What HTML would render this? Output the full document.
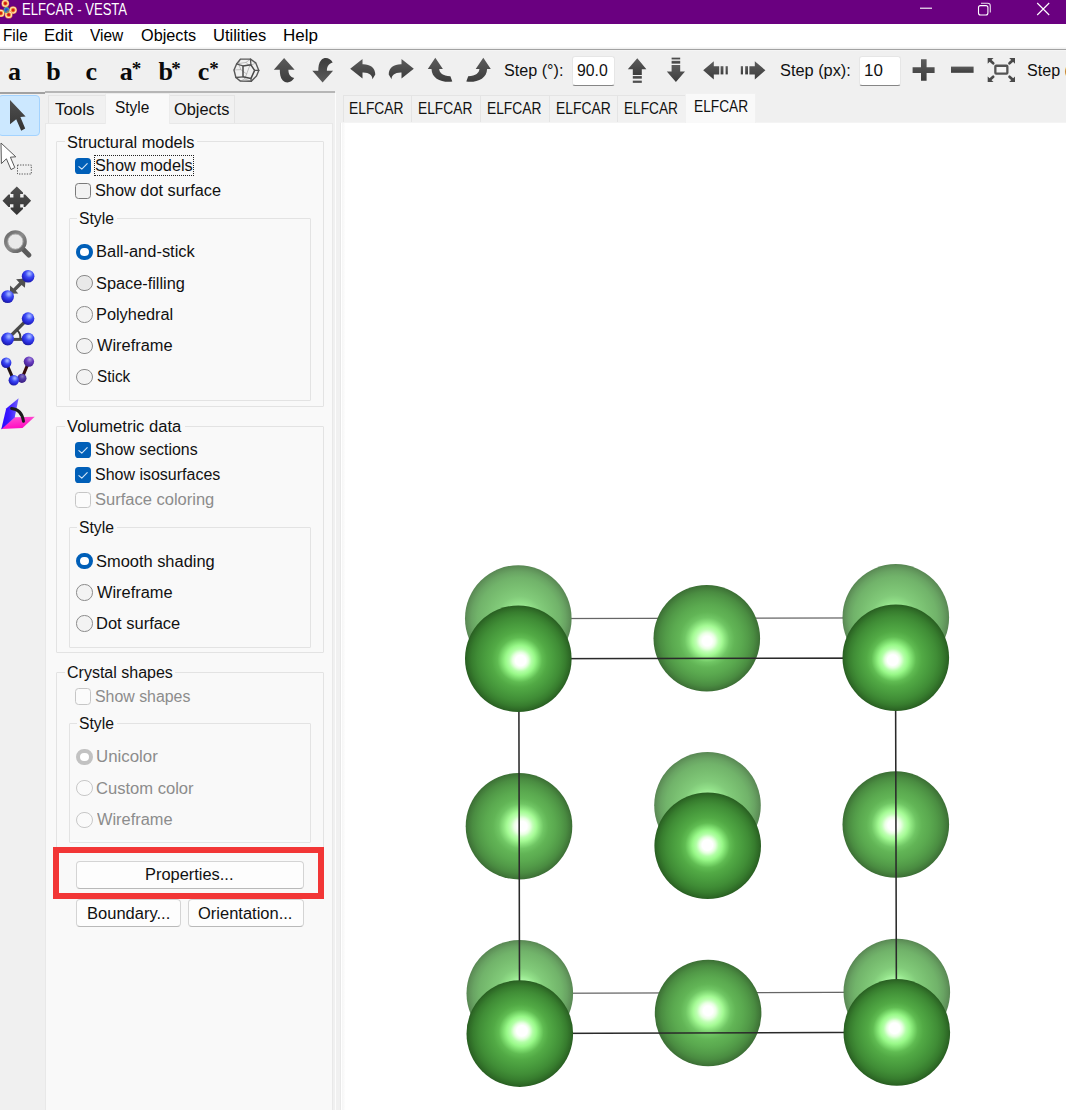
<!DOCTYPE html>
<html><head><meta charset="utf-8"><title>ELFCAR - VESTA</title>
<style>
html,body{margin:0;padding:0;}
body{width:1066px;height:1110px;overflow:hidden;position:relative;background:#f0f0f0;font-family:"Liberation Sans",sans-serif;}
.a{position:absolute;box-sizing:border-box;}
.t{position:absolute;white-space:nowrap;line-height:20px;transform-origin:0 50%;font-family:"Liberation Sans",sans-serif;}
.sb{position:absolute;white-space:nowrap;line-height:30px;font-family:"Liberation Serif",serif;font-weight:bold;color:#0a0a0a;transform-origin:0 50%;}
.gb{position:absolute;box-sizing:border-box;border:1.2px solid #e3e3e3;border-radius:1px;}
.lg{position:absolute;background:#f9f9f9;height:12px;}
.cb{position:absolute;box-sizing:border-box;width:16.3px;height:16.3px;border-radius:3.6px;}
.cb.on{background:#005fb8;}
.cb.off{background:#f2f2f2;border:1.4px solid #7a7a7a;}
.cb.dis{background:#fbfbfb;border:1.3px solid #c6c6c6;}
.rb{position:absolute;box-sizing:border-box;width:16.4px;height:16.4px;border-radius:50%;}
.rb.hov{background:#e9e9e9;border:1.4px solid #8a8a8a;}
.rb.off{background:#f3f3f3;border:1.4px solid #8c8c8c;}
.rb.on{background:#fff;border:4.7px solid #005fb8;}
.rb.dis{background:#fafafa;border:1.3px solid #c8c8c8;}
.rb.dison{background:#fff;border:4.8px solid #c2c2c2;}
.btn{position:absolute;box-sizing:border-box;background:#fdfdfd;border:1px solid #d4d4d4;border-bottom-color:#b9b9b9;border-radius:4px;}
.tab{position:absolute;box-sizing:border-box;background:#f1f1f1;border:1px solid #e4e4e4;border-bottom:none;}
.inp{position:absolute;box-sizing:border-box;background:#fff;border:1px solid #e6e6e6;border-bottom:1.6px solid #868686;border-radius:3px;}
svg{position:absolute;overflow:visible;}
</style></head><body>

<div class="a" style="left:0;top:0;width:1066px;height:23.6px;background:#6a0080;"></div>
<svg style="left:0;top:0" width="22" height="24" viewBox="0 0 22 24">
<defs><radialGradient id="ic"><stop offset="0" stop-color="#cc1010"/><stop offset=".3" stop-color="#d62618"/><stop offset=".45" stop-color="#f08a34"/><stop offset=".72" stop-color="#fde3b8"/><stop offset=".9" stop-color="#f9b066"/><stop offset="1" stop-color="#f08c4a" stop-opacity=".85"/></radialGradient>
<radialGradient id="icb"><stop offset="0" stop-color="#1846c8"/><stop offset=".6" stop-color="#2a68d8"/><stop offset="1" stop-color="#5ac27a"/></radialGradient></defs>
<g stroke="#d8c060" stroke-width="1.6"><path d="M6.5 10 L5.3 3.4M6.5 10 L13 10.1M6.5 10 L8.7 14.7M6.5 10 L0.8 13.2"/></g>
<circle cx="5.3" cy="3.4" r="3.9" fill="url(#ic)"/><circle cx="13.1" cy="10.1" r="3.9" fill="url(#ic)"/>
<circle cx="8.7" cy="14.7" r="3.9" fill="url(#ic)"/><circle cx="0.8" cy="13.2" r="3.9" fill="url(#ic)"/>
<circle cx="6.5" cy="10" r="2.9" fill="url(#icb)"/><circle cx="7.6" cy="11.4" r="1.2" fill="#b07848" opacity=".8"/>
</svg>
<span class="t" style="left:21.53px;top:-0.14px;font-size:16px;color:#fff;transform:scaleX(0.8171);">ELFCAR - VESTA</span>
<svg style="left:0;top:0" width="1066" height="24" viewBox="0 0 1066 24" fill="none" stroke="#fff" stroke-width="1.1">
<path d="M920 8.2H932"/>
<rect x="978.5" y="5.6" width="9.4" height="9.4" rx="2"/><path d="M981 3.2H987.6Q990.3 3.2 990.3 5.9V12.6" stroke-opacity=".85"/>
<path d="M1037.2 3 L1049.2 15 M1049.2 3 L1037.2 15"/>
</svg>
<div class="a" style="left:0;top:23.6px;width:1066px;height:23px;background:#fff;"></div>
<span class="t" style="left:3.45px;top:26.36px;font-size:16px;color:#000;transform:scaleX(0.9554);">File</span>
<span class="t" style="left:44.24px;top:26.36px;font-size:16px;color:#000;transform:scaleX(1.0366);">Edit</span>
<span class="t" style="left:90.34px;top:26.36px;font-size:16px;color:#000;transform:scaleX(0.9660);">View</span>
<span class="t" style="left:141.04px;top:26.36px;font-size:16px;color:#000;transform:scaleX(1.0149);">Objects</span>
<span class="t" style="left:212.73px;top:26.36px;font-size:16px;color:#000;transform:scaleX(1.0330);">Utilities</span>
<span class="t" style="left:283.31px;top:26.36px;font-size:16px;color:#000;transform:scaleX(1.0632);">Help</span>
<div class="a" style="left:0;top:46.6px;width:1066px;height:1.4px;background:#f7f7f7;"></div><div class="a" style="left:0;top:48.9px;width:1066px;height:1.2px;background:#a2a2a2;"></div><div class="a" style="left:0;top:50.1px;width:1066px;height:1px;background:#f5f5f5;"></div>
<div class="a" style="left:45px;top:91px;width:289.9px;height:1.7px;background:#b6b6b6;"></div><div class="a" style="left:0;top:92.1px;width:45px;height:1.7px;background:#a2a2a2;"></div>
<span class="sb" style="left:8.0px;top:56.5px;font-size:26px">a</span>
<span class="sb" style="left:46.2px;top:56.5px;font-size:26px">b</span>
<span class="sb" style="left:85.4px;top:56.5px;font-size:26px">c</span>
<span class="sb" style="left:119.8px;top:56.5px;font-size:26px">a</span>
<span class="sb" style="left:158.4px;top:56.5px;font-size:26px">b</span>
<span class="sb" style="left:197.8px;top:56.5px;font-size:26px">c</span>
<span class="sb" style="left:131.8px;top:54.1px;font-size:19px">*</span>
<span class="sb" style="left:171.3px;top:54.1px;font-size:19px">*</span>
<span class="sb" style="left:209.3px;top:54.1px;font-size:19px">*</span>
<span class="t" style="left:504.47px;top:61.06px;font-size:16px;color:#111;transform:scaleX(1.0090);">Step (°):</span>
<div class="inp" style="left:572.4px;top:55.8px;width:42.2px;height:30px;"></div>
<span class="t" style="left:577.17px;top:60.96px;font-size:16px;color:#111;transform:scaleX(0.9868);">90.0</span>
<span class="t" style="left:779.86px;top:61.06px;font-size:16px;color:#111;transform:scaleX(1.0211);">Step (px):</span>
<div class="inp" style="left:858.8px;top:55.8px;width:42.4px;height:30px;"></div>
<span class="t" style="left:863.51px;top:60.96px;font-size:16px;color:#111;transform:scaleX(1.0584);">10</span>
<span class="t" style="left:1027.28px;top:61.06px;font-size:16px;color:#111;transform:scaleX(1.0052);">Step (</span>
<svg style="left:0;top:0" width="1066" height="96" viewBox="0 0 1066 96">
<defs><linearGradient id="ag" x1="0" y1="0" x2="0" y2="1"><stop offset="0" stop-color="#5c5c5c"/><stop offset="1" stop-color="#3c3c3c"/></linearGradient>
<path id="aup" d="M284.1 57.9 L294.6 69.8 L288.4 69.8 C288.4 74.2 290.2 77 294.2 78.1 C291.8 82.6 286.2 84 282.8 80.6 C280.2 77.8 279.8 73.4 279.8 69.8 L273.8 69.8 Z"/>
<path id="alf" d="M350.2 68.8 L362.5 59 V64.3 C369.5 64 375.3 67.4 375.3 74.6 L372.4 79.3 C372.4 75.4 369.4 72.4 362.5 72.6 V78.6 Z"/>
<path id="accw" d="M435.3 57.8 L442.9 68.9 L439.2 68.9 C439.4 72.6 442.6 75.8 450.4 76.3 L452.3 81.6 C441.4 82.8 431.8 78.6 431.5 68.9 L427.8 68.9 Z"/>
</defs>
<!-- polyhedron -->
<g fill="none" stroke-linejoin="round" stroke-linecap="round">
<path d="M240.4 59.1 L238.6 63.6 L246 62.4 L250.5 59.1 M246 62.4 L249.6 66 M238.6 63.6 L240.8 69.6 L234 70 M240.8 69.6 L246.6 74 M246.6 74 L249.6 66 M246.6 74 L244.6 79 L240.4 81.1 M244.6 79 L251.3 81.3 M249.6 66 L255.8 62.9" stroke="#a8a8a8" stroke-width=".7"/>
<path d="M240.4 59.1 L250.5 59.1 L255.8 62.9 L258.8 70.4 L256.5 76 L251.3 81.3 L240.4 81.1 L235.9 77.5 L234 70 L236.6 64 Z" stroke="#585858" stroke-width="1.4"/>
<path d="M243 65.9 L250.9 64.8 L254.6 70.4 L250.9 78.6 L243 76.8 Z" stroke="#4a4a4a" stroke-width="1.5"/>
<path d="M243 65.9 L236.6 64 M250.9 64.8 L250.5 59.1 M254.6 70.4 L258.8 70.4 M250.9 78.6 L251.3 81.3 M243 76.8 L235.9 77.5" stroke="#555" stroke-width="1.3"/>
</g>
<g fill="url(#ag)">
<use href="#aup"/>
<use href="#aup" transform="translate(38.5 140.5) scale(1 -1)"/>
<use href="#alf"/>
<use href="#alf" transform="translate(764 0) scale(-1 1)"/>
<use href="#accw"/>
<use href="#accw" transform="translate(918.6 0) scale(-1 1)"/>
<!-- move up -->
<path d="M637.3 58.2 L646.4 69.2 H641.8 V75 H632.8 V69.2 H627.8 Z"/><rect x="632.8" y="76" width="9" height="2.6"/><rect x="632.8" y="80.6" width="9" height="2.2"/>
<!-- move down -->
<path d="M675.9 81.9 L685 71.6 H680.2 V65 H671.6 V71.6 H666.8 Z"/><rect x="671.6" y="60.8" width="8.6" height="2.8"/><rect x="671.6" y="57.6" width="8.6" height="1.8"/>
<!-- move left -->
<path d="M703.2 70.3 L713.8 61.2 V66.2 H719.2 V74.4 H713.8 V79.4 Z"/><rect x="720.6" y="66.2" width="2.8" height="8.2"/><rect x="725.6" y="66.2" width="2.2" height="8.2"/>
<!-- move right -->
<path d="M765.4 70.3 L754.8 61.2 V66.2 H749.4 V74.4 H754.8 V79.4 Z"/><rect x="745.2" y="66.2" width="2.8" height="8.2"/><rect x="740.8" y="66.2" width="2.2" height="8.2"/>
<!-- plus / minus -->
<path d="M921 59.3 H926.6 V67.2 H934.6 V72.9 H926.6 V80.8 H921 V72.9 H912.6 V67.2 H921 Z"/>
<rect x="951" y="66.6" width="22.6" height="6.2"/>
</g>
<!-- fit -->
<rect x="995.35" y="65.75" width="12" height="7.8" rx=".8" fill="#f4f4f4" stroke="#555" stroke-width="2.3"/>
<g id="fa"><path d="M987.7 58.1 H993.5 L987.7 63.7 Z" fill="#4a4a4a"/><path d="M989.6 60 L993.2 63.3" stroke="#4a4a4a" stroke-width="2.7" stroke-linecap="round"/></g>
<use href="#fa" transform="translate(2002.7 0) scale(-1 1)"/>
<use href="#fa" transform="translate(0 140.1) scale(1 -1)"/>
<use href="#fa" transform="translate(2002.7 140.1) scale(-1 -1)"/>
</svg>
<div class="a" style="left:-2px;top:95.1px;width:42px;height:41.2px;background:#cce8ff;border:1.4px solid #a3d3ff;border-radius:4px;"></div>
<svg style="left:0;top:0" width="46" height="440" viewBox="0 0 46 440">
<defs>
<radialGradient id="bb" cx=".6" cy=".3" r=".78"><stop offset="0" stop-color="#a6b6ff"/><stop offset=".14" stop-color="#8a9cff"/><stop offset=".4" stop-color="#3c4af4"/><stop offset=".68" stop-color="#2628d6"/><stop offset="1" stop-color="#17178c"/></radialGradient>
<radialGradient id="bp" cx=".58" cy=".3" r=".78"><stop offset="0" stop-color="#a898d8"/><stop offset=".4" stop-color="#6a3cc2"/><stop offset="1" stop-color="#381a80"/></radialGradient>
<radialGradient id="bd" cx=".55" cy=".3" r=".78"><stop offset="0" stop-color="#8c7cc2"/><stop offset=".4" stop-color="#5038a8"/><stop offset="1" stop-color="#361878"/></radialGradient>
<linearGradient id="dk" x1="0" y1="0" x2="0" y2="1"><stop offset="0" stop-color="#505050"/><stop offset="1" stop-color="#333"/></linearGradient>
<linearGradient id="mg" x1="0" y1="0" x2="1" y2="1"><stop offset="0" stop-color="#6a6a6a"/><stop offset=".5" stop-color="#8c8c8c"/><stop offset="1" stop-color="#5c5c5c"/></linearGradient>
<linearGradient id="pl" x1="0" y1="0" x2="1" y2="0"><stop offset="0" stop-color="#2a04ff"/><stop offset=".45" stop-color="#3a18ff"/><stop offset="1" stop-color="#7262ff"/></linearGradient>
<linearGradient id="pm" x1=".3" y1="0" x2=".6" y2="1"><stop offset="0" stop-color="#ff52d2"/><stop offset="1" stop-color="#ff06c0"/></linearGradient>
</defs>
<!-- select arrow -->
<path d="M10 100 L10 124.2 L16.2 119.2 L21.2 130.8 L25.2 128.4 L20.4 117 L25.6 116.6 Z" fill="url(#dk)"/>
<!-- white arrow + dotted rect -->
<path d="M1 143 L1.4 163.6 L6.4 158.8 L11 169.6 L14.8 167.6 L10.4 157.2 L15.8 156.8 Z" fill="#fff" stroke="#5a5a5a" stroke-width="1"/>
<rect x="17.5" y="165" width="13.8" height="9" fill="none" stroke="#555" stroke-width="1" stroke-dasharray="1.3 1.3"/>
<!-- move -->
<path d="M16.8 186.5 L23.0 192.5 L23.0 194.0 L20.2 194.0 L20.2 197.4 L23.6 197.4 L23.6 194.6 L25.1 194.6 L31.1 200.8 L25.1 207.0 L23.6 207.0 L23.6 204.2 L20.2 204.2 L20.2 207.6 L23.0 207.6 L23.0 209.1 L16.8 215.1 L10.6 209.1 L10.6 207.6 L13.4 207.6 L13.4 204.2 L10.0 204.2 L10.0 207.0 L8.5 207.0 L2.5 200.8 L8.5 194.6 L10.0 194.6 L10.0 197.4 L13.4 197.4 L13.4 194.0 L10.6 194.0 L10.6 192.5 Z" fill="url(#dk)"/>
<!-- magnifier -->
<path d="M23.6 249.8 L28.8 255" stroke="#5a5a5a" stroke-width="5" stroke-linecap="round"/>
<circle cx="15.4" cy="241.6" r="9.4" fill="#e9e9e9" stroke="url(#mg)" stroke-width="4"/>
<circle cx="15.4" cy="241.6" r="7.6" fill="none" stroke="#b8b8b8" stroke-width=".8"/>
<!-- distance -->
<path d="M9.9 293.7 L10.1 285.4 L13.4 288.4 L19.2 282.6 L16.1 279.2 L25.6 278.5 L24.9 287.8 L21.6 284.9 L15.8 290.8 L18.3 293.6 Z" fill="#505050"/>
<circle cx="28.1" cy="276.2" r="6.3" fill="url(#bb)"/><circle cx="7.6" cy="296.6" r="6.4" fill="url(#bb)"/>
<!-- angle -->
<path d="M7.6 339 L28.06 318.6" stroke="#4a4a4a" stroke-width="3.3" fill="none"/>
<path d="M7.6 339.4 H28" stroke="#484848" stroke-width="3" fill="none"/>
<path d="M17.2 330.2 Q20.8 333.4 20.3 338.6" stroke="#3c3c3c" stroke-width="1.9" fill="none"/>
<circle cx="28.06" cy="318.6" r="6.3" fill="url(#bb)"/><circle cx="7.6" cy="339" r="6.4" fill="url(#bb)"/><circle cx="28.06" cy="339" r="6.3" fill="url(#bb)"/>
<!-- dihedral -->
<path d="M6.2 362.8 L13.8 380.3" stroke="#241414" stroke-width="3" fill="none"/>
<path d="M28.9 361.6 L21.9 378.3" stroke="#360a0a" stroke-width="3" fill="none"/>
<circle cx="21.9" cy="378.3" r="4.6" fill="url(#bd)"/><circle cx="6.2" cy="362.8" r="5.2" fill="url(#bb)"/><circle cx="28.9" cy="361.6" r="5.2" fill="url(#bp)"/><circle cx="13.8" cy="380.3" r="5.2" fill="url(#bb)"/>
<!-- plane -->
<path d="M1.2 428.9 L14.7 417.2 L34.7 416.8 L22.5 427.9 Z" fill="url(#pm)"/>
<path d="M1.2 429.4 L6.2 408.5 L18.6 398.2 L14.7 417.6 Z" fill="url(#pl)"/>
<path d="M11.6 408.5 Q21.8 409.4 23.5 421.3" stroke="#1c1c1c" stroke-width="3" fill="none" stroke-linecap="round"/>
</svg>
<div class="a" style="left:45.2px;top:122.9px;width:287.4px;height:1000px;background:#f9f9f9;border:1.2px solid #e8e8e8;"></div><div class="a" style="left:335.1px;top:92.9px;width:1.1px;height:1020px;background:#fcfcfc;"></div>
<div class="tab" style="left:48.2px;top:95.4px;width:57.6px;height:27.8px;"></div>
<div class="tab" style="left:169px;top:95.4px;width:65.7px;height:27.8px;"></div>
<div class="tab" style="left:104.9px;top:92.7px;width:65px;height:31.4px;background:#f9f9f9;border-color:#ececec;"></div>
<span class="t" style="left:55.13px;top:100.16px;font-size:16px;color:#111;transform:scaleX(1.0572);">Tools</span>
<span class="t" style="left:114.70px;top:98.16px;font-size:16px;color:#111;transform:scaleX(0.9665);">Style</span>
<span class="t" style="left:174.23px;top:100.16px;font-size:16px;color:#111;transform:scaleX(1.0206);">Objects</span>
<div class="gb" style="left:56.4px;top:141.1px;width:267.2px;height:266.3px"></div>
<div class="lg" style="left:65.0px;top:136.5px;width:132.2px"></div><span class="t" style="left:67.26px;top:132.86px;font-size:16px;color:#111;transform:scaleX(1.0244);">Structural models</span>
<div class="cb on" style="left:75px;top:157.65px"></div><svg style="left:75px;top:157.65px" width="17" height="17" viewBox="0 0 17 17"><path d="M3.9 8.6 L6.8 11.2 L12.2 5.6" fill="none" stroke="#d4e6f7" stroke-width="1.1" stroke-linecap="round" stroke-linejoin="round"/></svg>
<span class="t" style="left:94.87px;top:156.26px;font-size:16px;color:#111;transform:scaleX(1.0174);">Show models</span>
<div class="a" style="left:93.7px;top:155.1px;width:100.2px;height:21.4px;border:1px dotted #222;"></div>
<div class="cb off" style="left:75px;top:182.65px"></div>
<span class="t" style="left:94.87px;top:181.26px;font-size:16px;color:#111;transform:scaleX(1.0189);">Show dot surface</span>
<div class="gb" style="left:68.6px;top:218px;width:242.7px;height:183.0px"></div>
<div class="lg" style="left:77.1px;top:212.9px;width:39.5px"></div><span class="t" style="left:79.39px;top:209.26px;font-size:16px;color:#111;transform:scaleX(0.9811);">Style</span>
<div class="rb on" style="left:76.15px;top:243.80px"></div>
<span class="t" style="left:95.85px;top:242.36px;font-size:16px;color:#111;transform:scaleX(1.0290);">Ball-and-stick</span>
<div class="rb hov" style="left:76.15px;top:275.00px"></div>
<span class="t" style="left:96.47px;top:273.56px;font-size:16px;color:#111;transform:scaleX(1.0198);">Space-filling</span>
<div class="rb off" style="left:76.15px;top:306.30px"></div>
<span class="t" style="left:95.86px;top:304.86px;font-size:16px;color:#111;transform:scaleX(1.0214);">Polyhedral</span>
<div class="rb off" style="left:76.15px;top:337.50px"></div>
<span class="t" style="left:97.13px;top:336.06px;font-size:16px;color:#111;transform:scaleX(1.0245);">Wireframe</span>
<div class="rb off" style="left:76.15px;top:368.70px"></div>
<span class="t" style="left:96.51px;top:367.26px;font-size:16px;color:#111;transform:scaleX(0.9593);">Stick</span>
<div class="gb" style="left:56.4px;top:425.5px;width:267.2px;height:227.9px"></div>
<div class="lg" style="left:64.5px;top:420.5px;width:120.2px"></div><span class="t" style="left:67.43px;top:416.86px;font-size:16px;color:#111;transform:scaleX(1.0361);">Volumetric data</span>
<div class="cb on" style="left:75px;top:441.75px"></div><svg style="left:75px;top:441.75px" width="17" height="17" viewBox="0 0 17 17"><path d="M3.9 8.6 L6.8 11.2 L12.2 5.6" fill="none" stroke="#d4e6f7" stroke-width="1.1" stroke-linecap="round" stroke-linejoin="round"/></svg>
<span class="t" style="left:94.98px;top:440.26px;font-size:16px;color:#111;transform:scaleX(0.9944);">Show sections</span>
<div class="cb on" style="left:75px;top:466.85px"></div><svg style="left:75px;top:466.85px" width="17" height="17" viewBox="0 0 17 17"><path d="M3.9 8.6 L6.8 11.2 L12.2 5.6" fill="none" stroke="#d4e6f7" stroke-width="1.1" stroke-linecap="round" stroke-linejoin="round"/></svg>
<span class="t" style="left:94.98px;top:465.36px;font-size:16px;color:#111;transform:scaleX(0.9992);">Show isosurfaces</span>
<div class="cb dis" style="left:75px;top:491.65px"></div>
<span class="t" style="left:94.96px;top:490.16px;font-size:16px;color:#8c8c8c;transform:scaleX(1.0319);">Surface coloring</span>
<div class="gb" style="left:68.6px;top:526.7px;width:242.7px;height:120.9px"></div>
<div class="lg" style="left:77.1px;top:521.2px;width:39.5px"></div><span class="t" style="left:79.39px;top:517.56px;font-size:16px;color:#111;transform:scaleX(0.9811);">Style</span>
<div class="rb on" style="left:76.15px;top:553.10px"></div>
<span class="t" style="left:96.46px;top:551.66px;font-size:16px;color:#111;transform:scaleX(1.0264);">Smooth shading</span>
<div class="rb off" style="left:76.15px;top:584.20px"></div>
<span class="t" style="left:97.13px;top:582.76px;font-size:16px;color:#111;transform:scaleX(1.0245);">Wireframe</span>
<div class="rb off" style="left:76.15px;top:615.40px"></div>
<span class="t" style="left:95.85px;top:613.96px;font-size:16px;color:#111;transform:scaleX(1.0302);">Dot surface</span>
<div class="gb" style="left:56.4px;top:672px;width:267.2px;height:178.0px"></div>
<div class="lg" style="left:64.5px;top:666.5px;width:110.5px"></div><span class="t" style="left:66.70px;top:662.86px;font-size:16px;color:#111;transform:scaleX(1.0005);">Crystal shapes</span>
<div class="cb dis" style="left:75px;top:688.25px"></div>
<span class="t" style="left:94.99px;top:686.76px;font-size:16px;color:#8c8c8c;transform:scaleX(0.9930);">Show shapes</span>
<div class="gb" style="left:68.6px;top:723.3px;width:242.7px;height:119.9px"></div>
<div class="lg" style="left:77.1px;top:717.8px;width:39.5px"></div><span class="t" style="left:79.39px;top:714.16px;font-size:16px;color:#111;transform:scaleX(0.9811);">Style</span>
<div class="rb dison" style="left:76.15px;top:748.90px"></div>
<span class="t" style="left:95.90px;top:747.46px;font-size:16px;color:#8c8c8c;transform:scaleX(1.0524);">Unicolor</span>
<div class="rb dis" style="left:76.15px;top:780.10px"></div>
<span class="t" style="left:96.37px;top:778.66px;font-size:16px;color:#8c8c8c;transform:scaleX(1.0354);">Custom color</span>
<div class="rb dis" style="left:76.15px;top:811.60px"></div>
<span class="t" style="left:97.13px;top:810.16px;font-size:16px;color:#8c8c8c;transform:scaleX(1.0245);">Wireframe</span>
<div class="btn" style="left:76.4px;top:860.6px;width:227.2px;height:28px;"></div>
<span class="t" style="left:145.35px;top:864.96px;font-size:16px;color:#111;transform:scaleX(1.0253);">Properties...</span>
<div class="btn" style="left:76.4px;top:899.4px;width:104.2px;height:28px;"></div>
<span class="t" style="left:86.95px;top:903.66px;font-size:16px;color:#111;transform:scaleX(1.0325);">Boundary...</span>
<div class="btn" style="left:187.9px;top:899.4px;width:115.7px;height:28px;"></div>
<span class="t" style="left:198.13px;top:903.66px;font-size:16px;color:#111;transform:scaleX(1.0303);">Orientation...</span>
<div class="a" style="left:53.2px;top:846.8px;width:271.1px;height:52px;border:6.8px solid #f23636;"></div>
<div class="a" style="left:340.4px;top:122.4px;width:730px;height:990px;background:#fff;border-left:1.1px solid #e8e8e8;border-top:1px solid #f4f4f4;"></div><div class="a" style="left:341.5px;top:123px;width:3.2px;height:990px;background:linear-gradient(90deg,#f6f6f6,#fdfdfd);"></div>
<div class="tab" style="left:342.6px;top:94.6px;width:69.2px;height:27.8px;"></div>
<div class="tab" style="left:410.8px;top:94.6px;width:70.0px;height:27.8px;"></div>
<div class="tab" style="left:479.8px;top:94.6px;width:69.8px;height:27.8px;"></div>
<div class="tab" style="left:548.6px;top:94.6px;width:69.8px;height:27.8px;"></div>
<div class="tab" style="left:617.4px;top:94.6px;width:69.8px;height:27.8px;"></div>
<div class="tab" style="left:684.9px;top:92.7px;width:71.5px;height:30.4px;background:#f9f9f9;border-color:#f1f1f1;"></div>
<span class="t" style="left:349.47px;top:98.86px;font-size:16px;color:#111;transform:scaleX(0.8629);">ELFCAR</span>
<span class="t" style="left:418.27px;top:98.86px;font-size:16px;color:#111;transform:scaleX(0.8613);">ELFCAR</span>
<span class="t" style="left:486.77px;top:98.86px;font-size:16px;color:#111;transform:scaleX(0.8613);">ELFCAR</span>
<span class="t" style="left:555.76px;top:98.86px;font-size:16px;color:#111;transform:scaleX(0.8662);">ELFCAR</span>
<span class="t" style="left:624.48px;top:98.86px;font-size:16px;color:#111;transform:scaleX(0.8547);">ELFCAR</span>
<span class="t" style="left:693.77px;top:96.76px;font-size:16px;color:#111;transform:scaleX(0.8580);">ELFCAR</span>
<svg style="left:0;top:0" width="1066" height="1110" viewBox="0 0 1066 1110"><defs><radialGradient id="s0" gradientUnits="userSpaceOnUse" cx="518.3" cy="618.5" r="53.3" fx="520.9418" fy="621.405"><stop offset="0" stop-color="#e4ffe0"/><stop offset="0.12" stop-color="#c8ffc2"/><stop offset="0.22" stop-color="#aaf5a2"/><stop offset="0.32" stop-color="#92e089"/><stop offset="0.45" stop-color="#82cb7a"/><stop offset="0.62" stop-color="#79bf71"/><stop offset="0.78" stop-color="#71b36a"/><stop offset="0.88" stop-color="#69a463"/><stop offset="0.95" stop-color="#60945a"/><stop offset="1" stop-color="#588653"/></radialGradient><radialGradient id="s1" gradientUnits="userSpaceOnUse" cx="895.8" cy="617.4" r="53.3" fx="893.1568" fy="620.3204"><stop offset="0" stop-color="#e4ffe0"/><stop offset="0.12" stop-color="#c8ffc2"/><stop offset="0.22" stop-color="#aaf5a2"/><stop offset="0.32" stop-color="#92e089"/><stop offset="0.45" stop-color="#82cb7a"/><stop offset="0.62" stop-color="#79bf71"/><stop offset="0.78" stop-color="#71b36a"/><stop offset="0.88" stop-color="#69a463"/><stop offset="0.95" stop-color="#60945a"/><stop offset="1" stop-color="#588653"/></radialGradient><radialGradient id="s2" gradientUnits="userSpaceOnUse" cx="519.8" cy="993.3" r="53.3" fx="522.4208" fy="990.9577999999999"><stop offset="0" stop-color="#e4ffe0"/><stop offset="0.12" stop-color="#c8ffc2"/><stop offset="0.22" stop-color="#aaf5a2"/><stop offset="0.32" stop-color="#92e089"/><stop offset="0.45" stop-color="#82cb7a"/><stop offset="0.62" stop-color="#79bf71"/><stop offset="0.78" stop-color="#71b36a"/><stop offset="0.88" stop-color="#69a463"/><stop offset="0.95" stop-color="#60945a"/><stop offset="1" stop-color="#588653"/></radialGradient><radialGradient id="s3" gradientUnits="userSpaceOnUse" cx="896.8" cy="992.0" r="53.3" fx="894.1428" fy="989.676"><stop offset="0" stop-color="#e4ffe0"/><stop offset="0.12" stop-color="#c8ffc2"/><stop offset="0.22" stop-color="#aaf5a2"/><stop offset="0.32" stop-color="#92e089"/><stop offset="0.45" stop-color="#82cb7a"/><stop offset="0.62" stop-color="#79bf71"/><stop offset="0.78" stop-color="#71b36a"/><stop offset="0.88" stop-color="#69a463"/><stop offset="0.95" stop-color="#60945a"/><stop offset="1" stop-color="#588653"/></radialGradient><radialGradient id="s4" gradientUnits="userSpaceOnUse" cx="707.5" cy="805.3" r="53.3" fx="707.493" fy="805.5898"><stop offset="0" stop-color="#e4ffe0"/><stop offset="0.12" stop-color="#c8ffc2"/><stop offset="0.22" stop-color="#aaf5a2"/><stop offset="0.32" stop-color="#92e089"/><stop offset="0.45" stop-color="#82cb7a"/><stop offset="0.62" stop-color="#79bf71"/><stop offset="0.78" stop-color="#71b36a"/><stop offset="0.88" stop-color="#69a463"/><stop offset="0.95" stop-color="#60945a"/><stop offset="1" stop-color="#588653"/></radialGradient><radialGradient id="s5" gradientUnits="userSpaceOnUse" cx="706.8" cy="638.3" r="53.3" fx="707.3" fy="641.3"><stop offset="0" stop-color="#ffffff"/><stop offset="0.09" stop-color="#ffffff"/><stop offset="0.15" stop-color="#eaffe4"/><stop offset="0.21" stop-color="#c0ffb4"/><stop offset="0.28" stop-color="#a4fa94"/><stop offset="0.34" stop-color="#8ce37e"/><stop offset="0.42" stop-color="#70c664"/><stop offset="0.52" stop-color="#62b556"/><stop offset="0.66" stop-color="#5aa94f"/><stop offset="0.78" stop-color="#529b48"/><stop offset="0.88" stop-color="#4a8c41"/><stop offset="0.95" stop-color="#427b3a"/><stop offset="1" stop-color="#3b6e34"/></radialGradient><radialGradient id="s6" gradientUnits="userSpaceOnUse" cx="519.0" cy="826.2" r="53.3" fx="522.6" fy="826.3"><stop offset="0" stop-color="#ffffff"/><stop offset="0.09" stop-color="#ffffff"/><stop offset="0.15" stop-color="#eaffe4"/><stop offset="0.21" stop-color="#c0ffb4"/><stop offset="0.28" stop-color="#a4fa94"/><stop offset="0.34" stop-color="#8ce37e"/><stop offset="0.42" stop-color="#70c664"/><stop offset="0.52" stop-color="#62b556"/><stop offset="0.66" stop-color="#5aa94f"/><stop offset="0.78" stop-color="#529b48"/><stop offset="0.88" stop-color="#4a8c41"/><stop offset="0.95" stop-color="#427b3a"/><stop offset="1" stop-color="#3b6e34"/></radialGradient><radialGradient id="s7" gradientUnits="userSpaceOnUse" cx="895.8" cy="824.5" r="53.3" fx="892.3" fy="825.3"><stop offset="0" stop-color="#ffffff"/><stop offset="0.09" stop-color="#ffffff"/><stop offset="0.15" stop-color="#eaffe4"/><stop offset="0.21" stop-color="#c0ffb4"/><stop offset="0.28" stop-color="#a4fa94"/><stop offset="0.34" stop-color="#8ce37e"/><stop offset="0.42" stop-color="#70c664"/><stop offset="0.52" stop-color="#62b556"/><stop offset="0.66" stop-color="#5aa94f"/><stop offset="0.78" stop-color="#529b48"/><stop offset="0.88" stop-color="#4a8c41"/><stop offset="0.95" stop-color="#427b3a"/><stop offset="1" stop-color="#3b6e34"/></radialGradient><radialGradient id="s8" gradientUnits="userSpaceOnUse" cx="708.1" cy="1013.0" r="53.3" fx="708.1" fy="1010.5"><stop offset="0" stop-color="#ffffff"/><stop offset="0.09" stop-color="#ffffff"/><stop offset="0.15" stop-color="#eaffe4"/><stop offset="0.21" stop-color="#c0ffb4"/><stop offset="0.28" stop-color="#a4fa94"/><stop offset="0.34" stop-color="#8ce37e"/><stop offset="0.42" stop-color="#70c664"/><stop offset="0.52" stop-color="#62b556"/><stop offset="0.66" stop-color="#5aa94f"/><stop offset="0.78" stop-color="#529b48"/><stop offset="0.88" stop-color="#4a8c41"/><stop offset="0.95" stop-color="#427b3a"/><stop offset="1" stop-color="#3b6e34"/></radialGradient><radialGradient id="s9" gradientUnits="userSpaceOnUse" cx="518.3" cy="658.7" r="53.3" fx="520.9" fy="660.7"><stop offset="0" stop-color="#ffffff"/><stop offset="0.1" stop-color="#ffffff"/><stop offset="0.15" stop-color="#e6ffe0"/><stop offset="0.21" stop-color="#b4ffa8"/><stop offset="0.28" stop-color="#98f888"/><stop offset="0.34" stop-color="#7fdf70"/><stop offset="0.42" stop-color="#60bc52"/><stop offset="0.52" stop-color="#52aa45"/><stop offset="0.66" stop-color="#489b3d"/><stop offset="0.78" stop-color="#408d36"/><stop offset="0.88" stop-color="#377d2e"/><stop offset="0.95" stop-color="#2f6c27"/><stop offset="1" stop-color="#285e21"/></radialGradient><radialGradient id="s10" gradientUnits="userSpaceOnUse" cx="895.8" cy="657.7" r="53.3" fx="892.3" fy="660.3"><stop offset="0" stop-color="#ffffff"/><stop offset="0.1" stop-color="#ffffff"/><stop offset="0.15" stop-color="#e6ffe0"/><stop offset="0.21" stop-color="#b4ffa8"/><stop offset="0.28" stop-color="#98f888"/><stop offset="0.34" stop-color="#7fdf70"/><stop offset="0.42" stop-color="#60bc52"/><stop offset="0.52" stop-color="#52aa45"/><stop offset="0.66" stop-color="#489b3d"/><stop offset="0.78" stop-color="#408d36"/><stop offset="0.88" stop-color="#377d2e"/><stop offset="0.95" stop-color="#2f6c27"/><stop offset="1" stop-color="#285e21"/></radialGradient><radialGradient id="s11" gradientUnits="userSpaceOnUse" cx="519.8" cy="1033.6" r="53.3" fx="522.2" fy="1030.5"><stop offset="0" stop-color="#ffffff"/><stop offset="0.1" stop-color="#ffffff"/><stop offset="0.15" stop-color="#e6ffe0"/><stop offset="0.21" stop-color="#b4ffa8"/><stop offset="0.28" stop-color="#98f888"/><stop offset="0.34" stop-color="#7fdf70"/><stop offset="0.42" stop-color="#60bc52"/><stop offset="0.52" stop-color="#52aa45"/><stop offset="0.66" stop-color="#489b3d"/><stop offset="0.78" stop-color="#408d36"/><stop offset="0.88" stop-color="#377d2e"/><stop offset="0.95" stop-color="#2f6c27"/><stop offset="1" stop-color="#285e21"/></radialGradient><radialGradient id="s12" gradientUnits="userSpaceOnUse" cx="896.8" cy="1032.4" r="53.3" fx="894.3" fy="1027.8"><stop offset="0" stop-color="#ffffff"/><stop offset="0.1" stop-color="#ffffff"/><stop offset="0.15" stop-color="#e6ffe0"/><stop offset="0.21" stop-color="#b4ffa8"/><stop offset="0.28" stop-color="#98f888"/><stop offset="0.34" stop-color="#7fdf70"/><stop offset="0.42" stop-color="#60bc52"/><stop offset="0.52" stop-color="#52aa45"/><stop offset="0.66" stop-color="#489b3d"/><stop offset="0.78" stop-color="#408d36"/><stop offset="0.88" stop-color="#377d2e"/><stop offset="0.95" stop-color="#2f6c27"/><stop offset="1" stop-color="#285e21"/></radialGradient><radialGradient id="s13" gradientUnits="userSpaceOnUse" cx="707.7" cy="845.8" r="53.3" fx="707.4" fy="845.0"><stop offset="0" stop-color="#ffffff"/><stop offset="0.1" stop-color="#ffffff"/><stop offset="0.15" stop-color="#e6ffe0"/><stop offset="0.21" stop-color="#b4ffa8"/><stop offset="0.28" stop-color="#98f888"/><stop offset="0.34" stop-color="#7fdf70"/><stop offset="0.42" stop-color="#60bc52"/><stop offset="0.52" stop-color="#52aa45"/><stop offset="0.66" stop-color="#489b3d"/><stop offset="0.78" stop-color="#408d36"/><stop offset="0.88" stop-color="#377d2e"/><stop offset="0.95" stop-color="#2f6c27"/><stop offset="1" stop-color="#285e21"/></radialGradient></defs><g stroke="#666" stroke-width="1.35" fill="none"><path d="M518 618.6 L896 617.8 M520 993.4 L897 992.1"/></g>
<circle cx="518.3" cy="618.5" r="53.3" fill="url(#s0)"/>
<circle cx="895.8" cy="617.4" r="53.3" fill="url(#s1)"/>
<circle cx="519.8" cy="993.3" r="53.3" fill="url(#s2)"/>
<circle cx="896.8" cy="992.0" r="53.3" fill="url(#s3)"/>
<circle cx="707.5" cy="805.3" r="53.3" fill="url(#s4)"/>
<circle cx="706.8" cy="638.3" r="53.3" fill="url(#s5)"/>
<circle cx="519.0" cy="826.2" r="53.3" fill="url(#s6)"/>
<circle cx="895.8" cy="824.5" r="53.3" fill="url(#s7)"/>
<circle cx="708.1" cy="1013.0" r="53.3" fill="url(#s8)"/>
<g stroke="#2a2a2a" stroke-width="1.55" fill="none"><path d="M518 658.8 L896 658.1 M520 1033.5 L897 1032.3 M518.8 658 L519.6 1034 M895.5 658 L896.5 1033"/></g>
<circle cx="518.3" cy="658.7" r="53.3" fill="url(#s9)"/>
<circle cx="895.8" cy="657.7" r="53.3" fill="url(#s10)"/>
<circle cx="519.8" cy="1033.6" r="53.3" fill="url(#s11)"/>
<circle cx="896.8" cy="1032.4" r="53.3" fill="url(#s12)"/>
<circle cx="707.7" cy="845.8" r="53.3" fill="url(#s13)"/></svg>
</body></html>
